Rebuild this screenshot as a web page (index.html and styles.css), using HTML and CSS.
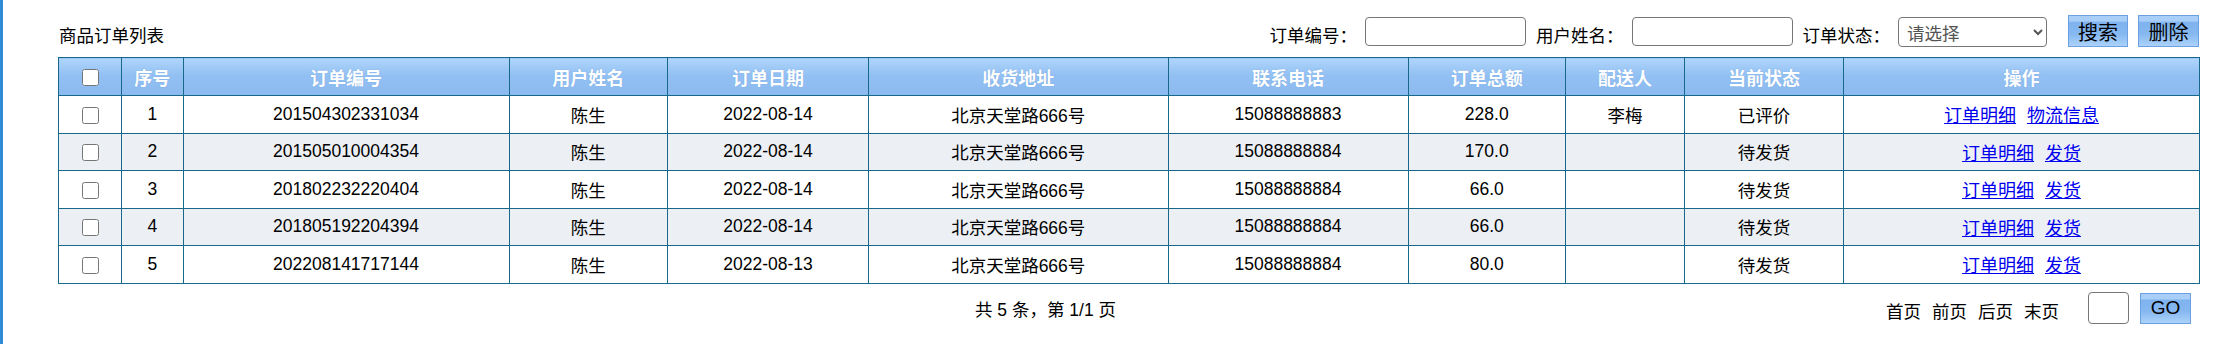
FILE: index.html
```html
<!DOCTYPE html>
<html lang="zh-CN">

<head>
  <meta charset="UTF-8">
  <meta name="viewport" content="width=device-width, initial-scale=1.0">
  <title>商品订单列表</title>
  <link rel="stylesheet" href="styles.css">
</head>

<body>
  <div class="page">
    <!-- 标题和查询条件 -->
    <div class="toolbar">
      <span class="title">商品订单列表</span>
      <form class="search" onsubmit="return false">
        <label class="lbl">订单编号：</label>
        <input type="text" class="txt">
        <label class="lbl">用户姓名：</label>
        <input type="text" class="txt">
        <label class="lbl">订单状态：</label>
        <select class="sel">
          <option>请选择</option>
          <option>待发货</option>
          <option>已发货</option>
          <option>已评价</option>
        </select>
        <button class="btn btn-search">搜索</button>
        <button class="btn btn-del">删除</button>
      </form>
    </div>

    <!-- 订单列表 -->
    <table class="grid">
      <colgroup>
        <col style="width:63px">
        <col style="width:61.5px">
        <col style="width:326px">
        <col style="width:158.5px">
        <col style="width:201px">
        <col style="width:299.5px">
        <col style="width:240px">
        <col style="width:157.5px">
        <col style="width:119px">
        <col style="width:159px">
        <col style="width:356px">
      </colgroup>
      <thead>
        <tr>
          <th><input type="checkbox" class="chk"></th>
          <th>序号</th>
          <th>订单编号</th>
          <th>用户姓名</th>
          <th>订单日期</th>
          <th>收货地址</th>
          <th>联系电话</th>
          <th>订单总额</th>
          <th>配送人</th>
          <th>当前状态</th>
          <th>操作</th>
        </tr>
      </thead>
      <tbody>
        <tr>
          <td><input type="checkbox" class="chk"></td>
          <td>1</td>
          <td>201504302331034</td>
          <td>陈生</td>
          <td>2022-08-14</td>
          <td>北京天堂路666号</td>
          <td>15088888883</td>
          <td>228.0</td>
          <td>李梅</td>
          <td>已评价</td>
          <td class="ops"><a href="#">订单明细</a> <a href="#">物流信息</a></td>
        </tr>
        <tr>
          <td><input type="checkbox" class="chk"></td>
          <td>2</td>
          <td>201505010004354</td>
          <td>陈生</td>
          <td>2022-08-14</td>
          <td>北京天堂路666号</td>
          <td>15088888884</td>
          <td>170.0</td>
          <td></td>
          <td>待发货</td>
          <td class="ops"><a href="#">订单明细</a> <a href="#">发货</a></td>
        </tr>
        <tr>
          <td><input type="checkbox" class="chk"></td>
          <td>3</td>
          <td>201802232220404</td>
          <td>陈生</td>
          <td>2022-08-14</td>
          <td>北京天堂路666号</td>
          <td>15088888884</td>
          <td>66.0</td>
          <td></td>
          <td>待发货</td>
          <td class="ops"><a href="#">订单明细</a> <a href="#">发货</a></td>
        </tr>
        <tr>
          <td><input type="checkbox" class="chk"></td>
          <td>4</td>
          <td>201805192204394</td>
          <td>陈生</td>
          <td>2022-08-14</td>
          <td>北京天堂路666号</td>
          <td>15088888884</td>
          <td>66.0</td>
          <td></td>
          <td>待发货</td>
          <td class="ops"><a href="#">订单明细</a> <a href="#">发货</a></td>
        </tr>
        <tr>
          <td><input type="checkbox" class="chk"></td>
          <td>5</td>
          <td>202208141717144</td>
          <td>陈生</td>
          <td>2022-08-13</td>
          <td>北京天堂路666号</td>
          <td>15088888884</td>
          <td>80.0</td>
          <td></td>
          <td>待发货</td>
          <td class="ops"><a href="#">订单明细</a> <a href="#">发货</a></td>
        </tr>
      </tbody>
    </table>

    <!-- 分页 -->
    <div class="pager">
      <span class="count">共 5 条，第 1/1 页</span>
      <div class="nav">
        <span class="nav-link">首页</span>
        <span class="nav-link">前页</span>
        <span class="nav-link">后页</span>
        <span class="nav-link">末页</span>
        <input type="text" class="page-no">
        <button class="btn btn-go">GO</button>
      </div>
    </div>
  </div>
</body>

</html>
```

FILE: styles.css
```css
/* 整体布局 */
html,
body {
  margin: 0;
  height: 100%;
}

body {
  border-left: 3px solid #2f8bd6;
  background-color: #fff;
  font-family: "Liberation Sans", "Noto Sans CJK SC", sans-serif;
  font-size: 17.5px;
  color: #000;
}

.page {
  padding: 15px 30px 0 55px;
}

/* 标题和查询条件 */
.toolbar {
  display: flex;
  justify-content: space-between;
  align-items: flex-end;
  height: 32px;
}

.title,
.lbl {
  line-height: 20px;
  padding-bottom: 1px;
  white-space: nowrap;
}

.title {
  margin-left: 1px;
}

.search {
  display: flex;
  align-items: flex-end;
  margin: 0;
}

.lbl {
  margin-right: 8px;
}

.txt {
  box-sizing: border-box;
  width: 161px;
  height: 29px;
  margin: 0 10px 1px 0;
  border: 1px solid #767676;
  border-radius: 4px;
  padding: 0 4px;
  font-size: 17.5px;
}

.sel {
  box-sizing: border-box;
  width: 149px;
  height: 30px;
  margin: 0 21px 0 0;
  border: 1px solid #767676;
  border-radius: 4px;
  padding: 0 4px;
  font-family: "Noto Sans CJK SC", sans-serif;
  font-size: 17.5px;
  color: #555;
  background-color: #fff;
}

/* 按钮 */
.btn {
  box-sizing: border-box;
  height: 32px;
  padding: 0;
  border: 1px solid #6d9fe3;
  background: linear-gradient(to bottom, #a9cff8 0, #a9cff8 16%, #7fb3ef 22%, #86b8f0 60%, #acd2fa 100%);
  font-family: "Liberation Sans", "Noto Sans CJK SC", sans-serif;
  font-size: 20px;
  color: #000;
  cursor: pointer;
}

.btn-search {
  width: 60px;
  margin-right: 10px;
}

.btn-del {
  width: 61px;
}

/* 订单列表 */
.grid {
  width: 2141px;
  margin-top: 10px;
  border-collapse: collapse;
  table-layout: fixed;
  border: 1px solid #17698b;
}

.grid th,
.grid td {
  border: 1px solid #17698b;
  padding: 0;
  text-align: center;
  white-space: nowrap;
}

.grid th {
  height: 37px;
  background: linear-gradient(to bottom, #afd5fa 0%, #93c0f3 45%, #8bbaf0 100%);
  color: #fff;
  font-size: 18px;
  font-weight: bold;
  text-shadow: 0 0 1px #6f9fd6;
}

.grid td {
  height: 36.5px;
}

.grid tbody tr:nth-child(even) {
  background-color: #eceff4;
}

.chk {
  width: 17px;
  height: 17px;
  margin: 0;
  vertical-align: middle;
}

.ops a {
  color: #0000ee;
  font-size: 18px;
}

.ops a+a {
  margin-left: 6px;
}

/* 分页 */
.pager {
  display: flex;
  align-items: flex-end;
  height: 32px;
  margin-top: 8px;
}

.count {
  margin-left: 917px;
  line-height: 20px;
  padding-bottom: 4px;
  white-space: nowrap;
}

.nav {
  display: flex;
  align-items: flex-end;
  margin-left: auto;
  margin-right: 8px;
}

.nav-link {
  margin-left: 11px;
  line-height: 20px;
  padding-bottom: 2px;
}

.page-no {
  box-sizing: border-box;
  width: 41px;
  height: 32px;
  margin-left: 29px;
  border: 1px solid #767676;
  border-radius: 4px;
}

.btn-go {
  width: 51px;
  height: 31px;
  margin-left: 11px;
  font-size: 19px;
}
```
